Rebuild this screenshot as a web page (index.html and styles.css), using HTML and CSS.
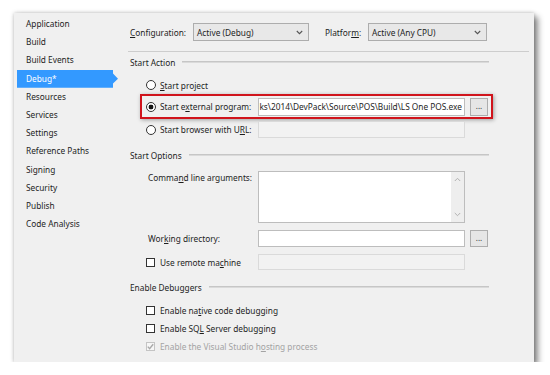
FILE: index.html
```html
<!DOCTYPE html>
<html>
<head>
<meta charset="utf-8">
<link rel="stylesheet" href="styles.css">
</head>
<body>
<div class="stage">
  <div class="panel">
    <nav class="side">
      <div class="item">Application</div>
      <div class="item">Build</div>
      <div class="item">Build Events</div>
      <div class="item active">Debug*</div>
      <div class="item">Resources</div>
      <div class="item">Services</div>
      <div class="item">Settings</div>
      <div class="item">Reference Paths</div>
      <div class="item">Signing</div>
      <div class="item">Security</div>
      <div class="item">Publish</div>
      <div class="item">Code Analysis</div>
    </nav>
    <main class="content">
      <div class="topbar">
        <span class="lbl-config"><u>C</u>onfiguration:</span>
        <div class="select sel-config"><span>Active (Debug)</span><svg class="chev" width="7" height="5" viewBox="0 0 7 5"><path d="M0.8 1 L3.5 3.7 L6.2 1" fill="none" stroke="#555" stroke-width="1.1"/></svg></div>
        <span class="lbl-plat">Platfor<u>m</u>:</span>
        <div class="select sel-plat"><span>Active (Any CPU)</span><svg class="chev" width="7" height="5" viewBox="0 0 7 5"><path d="M0.8 1 L3.5 3.7 L6.2 1" fill="none" stroke="#555" stroke-width="1.1"/></svg></div>
      </div>
      <section class="body">
        <div class="heading h1"><span>Start Action</span><i class="rule"></i></div>
        <div class="row r-project">
          <div class="ctl"><span class="radio"></span><span><u>S</u>tart project</span></div>
        </div>
        <div class="highlight">
          <div class="row r-ext">
            <div class="ctl"><span class="radio checked"></span><span>Start e<u>x</u>ternal program:</span></div>
            <div class="field"><span>ks\2014\DevPack\Source\POS\Build\LS One POS.exe</span></div>
            <div class="btn">...</div>
          </div>
        </div>
        <div class="row r-url">
          <div class="ctl"><span class="radio"></span><span>Start browser with U<u>R</u>L:</span></div>
          <div class="field disabled"></div>
        </div>
        <div class="heading h2"><span>Start Options</span><i class="rule"></i></div>
        <div class="row r-cmd">
          <div class="ctl lbl">Comma<u>n</u>d line arguments:</div>
          <div class="field area">
            <div class="scroll">
              <svg width="7" height="5" viewBox="0 0 7 5"><path d="M0.8 4 L3.5 1.3 L6.2 4" fill="none" stroke="#b0b0b0" stroke-width="1"/></svg>
              <svg width="7" height="5" viewBox="0 0 7 5"><path d="M0.8 1 L3.5 3.7 L6.2 1" fill="none" stroke="#b0b0b0" stroke-width="1"/></svg>
            </div>
          </div>
        </div>
        <div class="row r-dir">
          <div class="ctl lbl">Wor<u>k</u>ing directory:</div>
          <div class="field"></div>
          <div class="btn">...</div>
        </div>
        <div class="row r-remote">
          <div class="ctl"><span class="check"></span><span>Use remote ma<u>c</u>hine</span></div>
          <div class="field disabled"></div>
        </div>
        <div class="heading h3"><span>Enable Debuggers</span><i class="rule"></i></div>
        <div class="row r-chk first">
          <div class="ctl wide"><span class="check"></span><span>Enable na<u>t</u>ive code debugging</span></div>
        </div>
        <div class="row r-chk">
          <div class="ctl wide"><span class="check"></span><span>Enable SQ<u>L</u> Server debugging</span></div>
        </div>
        <div class="row r-chk">
          <div class="ctl wide off"><span class="check checked-off"><svg width="9" height="9" viewBox="0 0 9 9"><path d="M1.8 4.6 L3.6 6.6 L7.2 2.2" fill="none" stroke="#a9a9a9" stroke-width="1.4"/></svg></span><span>Enable the Visual Studio h<u>o</u>sting process</span></div>
        </div>
      </section>
    </main>
  </div>
</div>
</body>
</html>
```
FILE: styles.css
```css
html, body {
  margin: 0;
  background: #ffffff;
}
body {
  font-family: "Noto Sans", "Open Sans", sans-serif;
  font-size: 8.3px;
  color: #1e1e1e;
}
u {
  text-decoration-thickness: 1px;
  text-underline-offset: 1px;
}
.stage {
  padding: 13px 0 0 14px;
}
.panel {
  width: 520px;
  height: 349px;
  background: #f0f0f0;
  display: flex;
  box-shadow: 0 0 4px rgba(0, 0, 0, 0.25), 4px 4px 6px rgba(0, 0, 0, 0.45);
}
.side {
  width: 108px;
  flex: none;
  padding-top: 2px;
  box-sizing: border-box;
}
.item {
  height: 18.2px;
  line-height: 18.2px;
  padding-left: 9px;
  margin-left: 3px;
  white-space: nowrap;
}
.item.active {
  width: 101px;
  box-sizing: border-box;
  background: #3399ff;
  color: #ffffff;
  clip-path: polygon(0 0, 96px 0, 96px 4px, 101px 50%, 96px 14px, 96px 100%, 0 100%);
}
.content {
  flex: 1;
  display: flex;
  flex-direction: column;
}
.topbar {
  margin: 0 5px 0 6px;
  padding: 10px 0 10px 2px;
  height: 18px;
  display: flex;
  align-items: center;
  border-bottom: 1px solid #cdcdcd;
}
.lbl-config {
  width: 63px;
  flex: none;
}
.lbl-plat {
  margin-left: 16px;
  width: 43px;
  flex: none;
}
.select {
  height: 18px;
  box-sizing: border-box;
  border: 1px solid #adadad;
  background: #e8e8e8;
  display: flex;
  align-items: center;
  justify-content: space-between;
  padding: 0 5px 0 3px;
}
.sel-config { width: 116px; }
.sel-plat { width: 119px; }
.body {
  padding-left: 8px;
  display: flex;
  flex-direction: column;
}
.heading {
  width: 359px;
  height: 20px;
  display: flex;
  align-items: center;
}
.heading .rule {
  flex: 1;
  margin-left: 7px;
  height: 0;
  border-top: 1px solid #c6c6c6;
  border-bottom: 1px solid #dadada;
}
.h2, .h3 { margin-top: 7px; }
.row {
  display: grid;
  grid-template-columns: 123px 207px 18px;
  column-gap: 5px;
  align-items: center;
}
.ctl {
  display: flex;
  align-items: center;
  padding-left: 16px;
  white-space: nowrap;
  box-sizing: border-box;
}
.ctl.wide {
  grid-column: 1 / 4;
}
.ctl.lbl {
  padding-left: 18px;
}
.ctl.off {
  color: #a3a3a3;
}
.radio {
  width: 10px;
  height: 10px;
  box-sizing: border-box;
  border: 1px solid #333333;
  border-radius: 50%;
  background: #ffffff;
  margin-right: 4px;
  flex: none;
}
.radio.checked {
  background: radial-gradient(circle, #141414 0 2.1px, #ffffff 2.7px);
}
.check {
  width: 9px;
  height: 9px;
  box-sizing: border-box;
  border: 1px solid #333333;
  background: #ffffff;
  margin-right: 5px;
  flex: none;
  display: flex;
}
.check.checked-off {
  border-color: #c4c4c4;
  background: #f6f6f6;
}
.check svg {
  margin: -1px;
}
.r-project {
  margin-top: 4px;
  height: 18px;
}
.highlight {
  margin-left: 10px;
  width: 353px;
  height: 25px;
  box-sizing: border-box;
  border: 2px solid #d0141c;
  box-shadow: 1px 1px 4px rgba(0, 0, 0, 0.35);
  display: flex;
  align-items: center;
}
.r-ext {
  grid-template-columns: 111px 207px 18px;
}
.r-ext .ctl {
  padding-left: 4px;
}
.field {
  height: 18px;
  box-sizing: border-box;
  border: 1px solid #bdbdbd;
  background: #ffffff;
  display: flex;
  align-items: center;
  justify-content: flex-end;
  overflow: hidden;
  white-space: nowrap;
  padding: 0 2px;
}
.field.disabled {
  border-color: #dadada;
  background: #f2f2f2;
  height: 17px;
}
.btn {
  height: 18px;
  box-sizing: border-box;
  border: 1px solid #adadad;
  background: #e6e6e6;
  display: flex;
  align-items: center;
  justify-content: center;
  font-size: 8px;
  line-height: 1;
  padding-bottom: 2px;
  color: #333333;
}
.r-url {
  margin-top: 2px;
  height: 17px;
}
.r-cmd {
  margin-top: 6px;
  align-items: start;
}
.r-cmd .lbl {
  line-height: 12px;
  padding-top: 1px;
}
.field.area {
  height: 52px;
  padding: 0;
  justify-content: flex-end;
  align-items: stretch;
}
.scroll {
  width: 13px;
  background: #eeeeee;
  display: flex;
  flex-direction: column;
  justify-content: space-between;
  align-items: center;
  padding: 5px 0 5px;
}
.r-dir {
  margin-top: 7px;
  height: 17px;
}
.r-dir .field, .r-dir .btn {
  height: 17px;
}
.r-remote {
  margin-top: 7px;
  height: 16px;
}
.r-remote .field {
  height: 16px;
}
.r-chk {
  height: 18px;
}
.r-chk.first {
  margin-top: 4px;
}
```
